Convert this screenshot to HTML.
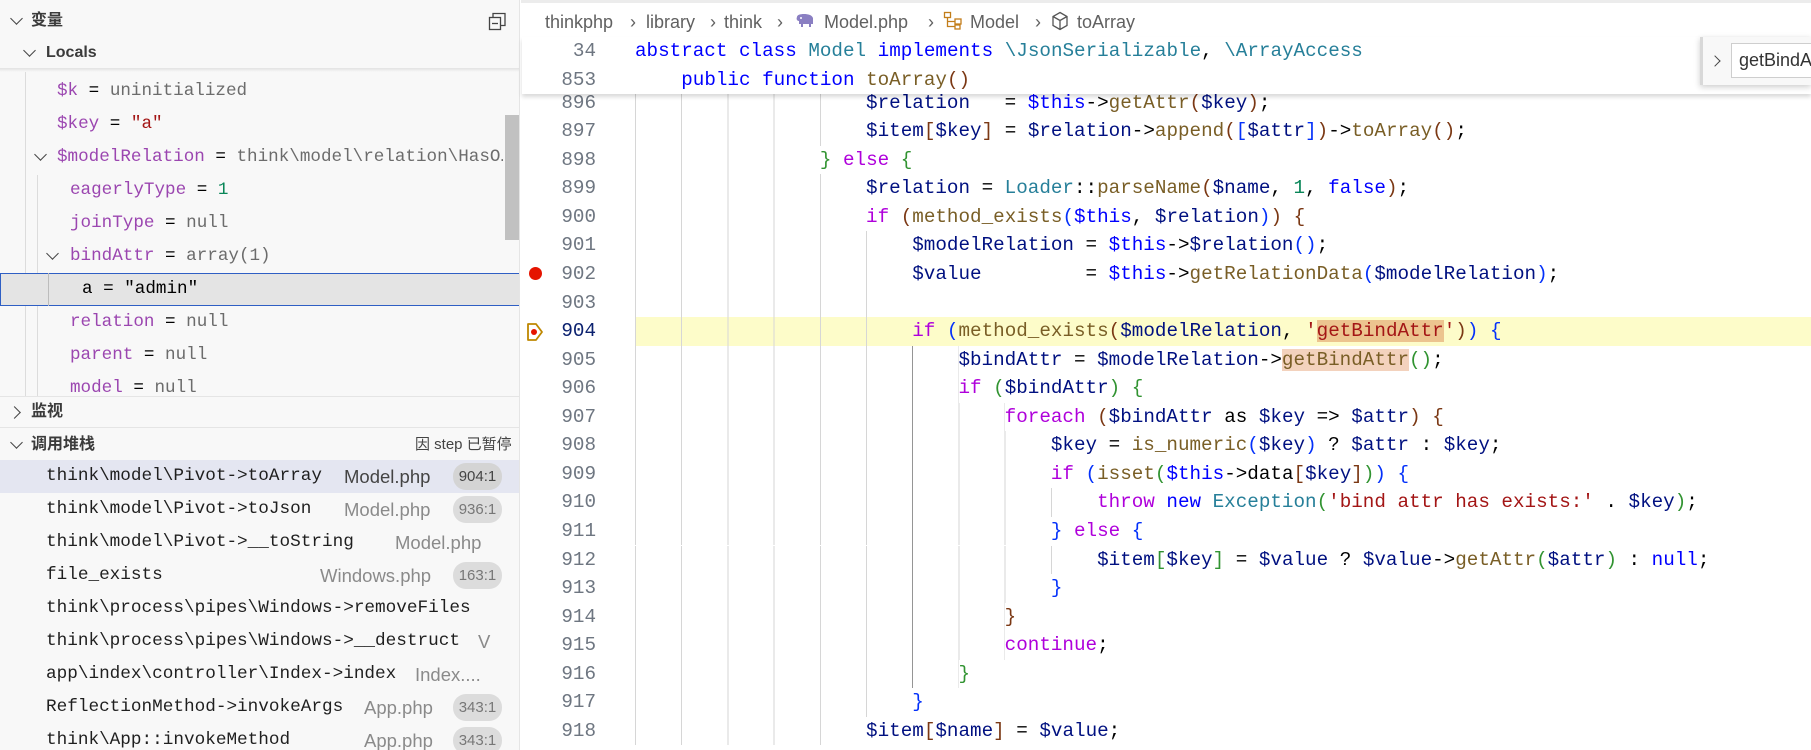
<!DOCTYPE html>
<html><head><meta charset="utf-8"><style>
*{margin:0;padding:0;box-sizing:border-box}
body{width:1811px;height:750px;overflow:hidden;background:#fff;position:relative;font-family:"Liberation Sans","Noto Sans CJK SC",sans-serif}
.abs{position:absolute;white-space:pre}
#side{position:absolute;left:0;top:0;width:520px;height:750px;background:#f8f8f8;border-right:1px solid #e5e5e5;overflow:hidden}
.hdr{position:absolute;font-weight:bold;font-size:16px;color:#3b3b3b;line-height:20px}
.chev{position:absolute;width:9px;height:9px;border-right:1.4px solid #444;border-bottom:1.4px solid #444}
.cd{transform:rotate(45deg)}
.cr{transform:rotate(-45deg)}
.tv{position:absolute;font-family:"Liberation Mono",monospace;font-size:17.6px;line-height:33px;white-space:pre}
.nm{color:#9b46b0}.vl{color:#6c6c6c}.st{color:#a31515}.nu{color:#098658}
.cs{position:absolute;left:0;width:520px;height:33px}
.cs .n{position:absolute;left:46px;top:0;font-family:"Liberation Mono",monospace;font-size:17.7px;line-height:33px;color:#1f1f1f;white-space:pre}
.cs .f{position:absolute;top:0;font-size:18.5px;line-height:33px;color:#8a8a8a;white-space:pre}
.cs .bd{position:absolute;left:453px;top:3px;width:49px;height:27px;border-radius:13px;background:#dcdcdc;color:#777;font-size:15px;line-height:27px;text-align:center}
.ln{position:absolute;left:540px;width:56px;text-align:right;font-family:"Liberation Mono",monospace;font-size:19.25px;line-height:28.55px;color:#6e7681}
.cl{position:absolute;left:635px;font-family:"Liberation Mono",monospace;font-size:19.25px;line-height:28.55px;color:#000;white-space:pre}
.gd{position:absolute;left:635px;height:28.55px;background:repeating-linear-gradient(to right,#d6d6d6 0 1px,transparent 1px 46.2px)}
.k{color:#0000ff}.c{color:#af00db}.v{color:#001080}.f{color:#795e26}.s{color:#a31515}.n{color:#098658}.t{color:#267f99}
.b1{color:#0431fa}.b2{color:#319331}.b3{color:#7b3814}
.hl{background:#ecc48f}.hl2{background:#f3d2bd}
.bc{position:absolute;top:11px;font-size:18px;line-height:22px;color:#616161;white-space:pre}
</style></head><body>

<div id="side">
  <div class="chev cd" style="left:12px;top:14px"></div>
  <div class="hdr" style="left:31px;top:11px">变量</div>
  <svg class="abs" style="left:488px;top:12px" width="19" height="19" viewBox="0 0 19 19"><rect x="1.5" y="5.5" width="11" height="12" fill="none" stroke="#444" stroke-width="1.3"/><path d="M5 5.5V1.5h12v12h-4.5" fill="none" stroke="#444" stroke-width="1.3"/><path d="M4 11.5h6" stroke="#444" stroke-width="1.3"/></svg>
  <div class="chev cd" style="left:25px;top:46px"></div>
  <div class="hdr" style="left:46px;top:43px">Locals</div>
  <div class="abs" style="left:0;top:68px;width:520px;height:4px;background:linear-gradient(#e2e2e2,rgba(248,248,248,0))"></div>

  <div class="abs" style="left:25px;top:72px;width:1px;height:325px;background:#dcdcdc"></div>
  <div class="abs" style="left:37px;top:175px;width:1px;height:222px;background:#dcdcdc"></div>
  <div class="abs" style="left:0;top:273px;width:520px;height:33px;background:#e4e4e4;border:1px solid #2f5fc4"></div>
  <div class="abs" style="left:48px;top:273px;width:1px;height:33px;background:#bcbcbc"></div>

  <div class="tv" style="left:57px;top:75px"><span class="nm">$k</span> = <span class="vl">uninitialized</span></div>
  <div class="tv" style="left:57px;top:108px"><span class="nm">$key</span> = <span class="st">"a"</span></div>
  <div class="chev cd" style="left:36px;top:150px"></div>
  <div class="tv" style="left:57px;top:141px"><span class="nm">$modelRelation</span> = <span class="vl">think\model\relation\HasO…</span></div>
  <div class="tv" style="left:70px;top:174px"><span class="nm">eagerlyType</span> = <span class="nu">1</span></div>
  <div class="tv" style="left:70px;top:207px"><span class="nm">joinType</span> = <span class="vl">null</span></div>
  <div class="chev cd" style="left:48px;top:249px"></div>
  <div class="tv" style="left:70px;top:240px"><span class="nm">bindAttr</span> = <span class="vl">array(1)</span></div>
  <div class="tv" style="left:82px;top:273px;color:#000">a = "admin"</div>
  <div class="tv" style="left:70px;top:306px"><span class="nm">relation</span> = <span class="vl">null</span></div>
  <div class="tv" style="left:70px;top:339px"><span class="nm">parent</span> = <span class="vl">null</span></div>
  <div class="tv" style="left:70px;top:372px"><span class="nm">model</span> = <span class="vl">null</span></div>
  <div class="abs" style="left:505px;top:115px;width:14px;height:125px;background:#c1c1c1"></div>

  <div class="abs" style="left:0;top:396px;width:520px;height:32px;background:#f8f8f8;border-top:1px solid #e5e5e5;border-bottom:1px solid #e5e5e5"></div>
  <div class="chev cr" style="left:10px;top:408px"></div>
  <div class="hdr" style="left:31px;top:402px">监视</div>
  <div class="chev cd" style="left:12px;top:438px"></div>
  <div class="hdr" style="left:31px;top:435px">调用堆栈</div>
  <div class="abs" style="left:415px;top:435px;font-size:15px;line-height:20px;color:#444">因 step 已暂停</div>

  <div class="cs" style="top:460px;background:#e4e6f1"><span class="n">think\model\Pivot-&gt;toArray</span><span class="f" style="left:344px;color:#444">Model.php</span><span class="bd" style="color:#444;background:#d4d4d4">904:1</span></div>
  <div class="cs" style="top:493px"><span class="n">think\model\Pivot-&gt;toJson</span><span class="f" style="left:344px">Model.php</span><span class="bd">936:1</span></div>
  <div class="cs" style="top:526px"><span class="n">think\model\Pivot-&gt;__toString</span><span class="f" style="left:395px">Model.php</span></div>
  <div class="cs" style="top:559px"><span class="n">file_exists</span><span class="f" style="left:320px">Windows.php</span><span class="bd">163:1</span></div>
  <div class="cs" style="top:592px"><span class="n">think\process\pipes\Windows-&gt;removeFiles</span></div>
  <div class="cs" style="top:625px"><span class="n">think\process\pipes\Windows-&gt;__destruct</span><span class="f" style="left:478px">V</span></div>
  <div class="cs" style="top:658px"><span class="n">app\index\controller\Index-&gt;index</span><span class="f" style="left:415px">Index....</span></div>
  <div class="cs" style="top:691px"><span class="n">ReflectionMethod-&gt;invokeArgs</span><span class="f" style="left:364px">App.php</span><span class="bd">343:1</span></div>
  <div class="cs" style="top:724px"><span class="n">think\App::invokeMethod</span><span class="f" style="left:364px">App.php</span><span class="bd">343:1</span></div>
</div>

<div class="abs" style="left:521px;top:0;width:1290px;height:3px;background:#ececec"></div>
<div class="bc" style="left:545px">thinkphp</div>
<div class="bc" style="left:630px">›</div>
<div class="bc" style="left:646px">library</div>
<div class="bc" style="left:710px">›</div>
<div class="bc" style="left:724px">think</div>
<div class="bc" style="left:777px">›</div>
<svg class="abs" style="left:794px;top:13px" width="22" height="16" viewBox="0 0 22 16"><path d="M3 4c0-2 3-3 7-3s8 1 9 4v6h-2v3h-2v-3H9v3H7v-3H5V8C3 8 2 6 3 4z" fill="#8a7fc2"/><circle cx="7" cy="5" r="1" fill="#fff"/></svg>
<div class="bc" style="left:824px">Model.php</div>
<div class="bc" style="left:928px">›</div>
<svg class="abs" style="left:943px;top:11px" width="20" height="20" viewBox="0 0 20 20" fill="none" stroke="#c27d1a" stroke-width="1.3"><rect x="1.5" y="1.5" width="6" height="5"/><rect x="12" y="8" width="6" height="5"/><rect x="12" y="14" width="5" height="4"/><path d="M4.5 6.5v9h7.5M4.5 10.5h7.5"/></svg>
<div class="bc" style="left:970px">Model</div>
<div class="bc" style="left:1035px">›</div>
<svg class="abs" style="left:1051px;top:11px" width="18" height="20" viewBox="0 0 18 20" fill="none" stroke="#555" stroke-width="1.3"><path d="M9 1.5l7 4v9l-7 4-7-4v-9z M2 5.5l7 4 7-4 M9 9.5v9"/></svg>
<div class="bc" style="left:1077px">toArray</div>

<div class="gd" style="top:88.7px;width:231px"></div>
<div class="gd" style="top:117.25px;width:231px"></div>
<div class="gd" style="top:145.8px;width:185px"></div>
<div class="gd" style="top:174.35px;width:231px"></div>
<div class="gd" style="top:202.9px;width:231px"></div>
<div class="gd" style="top:231.45px;width:277px"></div>
<div class="gd" style="top:260px;width:277px"></div>
<div class="gd" style="top:288.55px;width:277px"></div>
<div class="abs" style="left:635px;top:317.1px;width:1176px;height:28.55px;background:#fdfcc9"></div>
<div class="gd" style="top:317.1px;width:277px"></div>
<div class="gd" style="top:345.65px;width:324px"></div>
<div class="gd" style="top:374.2px;width:324px"></div>
<div class="gd" style="top:402.75px;width:370px"></div>
<div class="gd" style="top:431.3px;width:416px"></div>
<div class="gd" style="top:459.85px;width:416px"></div>
<div class="gd" style="top:488.4px;width:462px"></div>
<div class="gd" style="top:516.95px;width:416px"></div>
<div class="gd" style="top:545.5px;width:462px"></div>
<div class="gd" style="top:574.05px;width:416px"></div>
<div class="gd" style="top:602.6px;width:370px"></div>
<div class="gd" style="top:631.15px;width:370px"></div>
<div class="gd" style="top:659.7px;width:324px"></div>
<div class="gd" style="top:688.25px;width:277px"></div>
<div class="gd" style="top:716.8px;width:231px"></div>
<div class="abs" style="left:912px;top:345.65px;width:1px;height:342.6px;background:#959595"></div>

<div class="ln" style="top:88.7px">896</div>
<div class="ln" style="top:117.25px">897</div>
<div class="ln" style="top:145.8px">898</div>
<div class="ln" style="top:174.35px">899</div>
<div class="ln" style="top:202.9px">900</div>
<div class="ln" style="top:231.45px">901</div>
<div class="ln" style="top:260px">902</div>
<div class="ln" style="top:288.55px">903</div>
<div class="ln" style="top:317.1px;color:#0b216f">904</div>
<div class="ln" style="top:345.65px">905</div>
<div class="ln" style="top:374.2px">906</div>
<div class="ln" style="top:402.75px">907</div>
<div class="ln" style="top:431.3px">908</div>
<div class="ln" style="top:459.85px">909</div>
<div class="ln" style="top:488.4px">910</div>
<div class="ln" style="top:516.95px">911</div>
<div class="ln" style="top:545.5px">912</div>
<div class="ln" style="top:574.05px">913</div>
<div class="ln" style="top:602.6px">914</div>
<div class="ln" style="top:631.15px">915</div>
<div class="ln" style="top:659.7px">916</div>
<div class="ln" style="top:688.25px">917</div>
<div class="ln" style="top:716.8px">918</div>

<div class="abs" style="left:529px;top:267px;width:13px;height:13px;border-radius:50%;background:#e51400"></div>
<svg class="abs" style="left:526px;top:322px" width="18" height="20" viewBox="0 0 18 20"><path d="M2 2h8l6 8-6 8H2z" fill="#fff" stroke="#be8700" stroke-width="1.8" stroke-linejoin="round"/><circle cx="8" cy="10" r="3" fill="#e51400"/></svg>

<div class="cl" style="top:88.7px">                    <span class="v">$relation</span>   = <span class="k">$this</span>-&gt;<span class="f">getAttr</span><span class="b3">(</span><span class="v">$key</span><span class="b3">)</span>;</div>
<div class="cl" style="top:117.25px">                    <span class="v">$item</span><span class="b3">[</span><span class="v">$key</span><span class="b3">]</span> = <span class="v">$relation</span>-&gt;<span class="f">append</span><span class="b3">(</span><span class="b1">[</span><span class="v">$attr</span><span class="b1">]</span><span class="b3">)</span>-&gt;<span class="f">toArray</span><span class="b3">()</span>;</div>
<div class="cl" style="top:145.8px">                <span class="b2">}</span> <span class="c">else</span> <span class="b2">{</span></div>
<div class="cl" style="top:174.35px">                    <span class="v">$relation</span> = <span class="t">Loader</span>::<span class="f">parseName</span><span class="b3">(</span><span class="v">$name</span>, <span class="n">1</span>, <span class="k">false</span><span class="b3">)</span>;</div>
<div class="cl" style="top:202.9px">                    <span class="c">if</span> <span class="b3">(</span><span class="f">method_exists</span><span class="b1">(</span><span class="k">$this</span>, <span class="v">$relation</span><span class="b1">)</span><span class="b3">)</span> <span class="b3">{</span></div>
<div class="cl" style="top:231.45px">                        <span class="v">$modelRelation</span> = <span class="k">$this</span>-&gt;<span class="v">$relation</span><span class="b1">()</span>;</div>
<div class="cl" style="top:260px">                        <span class="v">$value</span>         = <span class="k">$this</span>-&gt;<span class="f">getRelationData</span><span class="b1">(</span><span class="v">$modelRelation</span><span class="b1">)</span>;</div>
<div class="cl" style="top:317.1px">                        <span class="c">if</span> <span class="b1">(</span><span class="f">method_exists</span><span class="b3">(</span><span class="v">$modelRelation</span>, <span class="s">'<span class="hl">getBindAttr</span>'</span><span class="b3">)</span><span class="b1">)</span> <span class="b1">{</span></div>
<div class="cl" style="top:345.65px">                            <span class="v">$bindAttr</span> = <span class="v">$modelRelation</span>-&gt;<span class="f hl2">getBindAttr</span><span class="b2">()</span>;</div>
<div class="cl" style="top:374.2px">                            <span class="c">if</span> <span class="b2">(</span><span class="v">$bindAttr</span><span class="b2">)</span> <span class="b2">{</span></div>
<div class="cl" style="top:402.75px">                                <span class="c">foreach</span> <span class="b3">(</span><span class="v">$bindAttr</span> as <span class="v">$key</span> =&gt; <span class="v">$attr</span><span class="b3">)</span> <span class="b3">{</span></div>
<div class="cl" style="top:431.3px">                                    <span class="v">$key</span> = <span class="f">is_numeric</span><span class="b1">(</span><span class="v">$key</span><span class="b1">)</span> ? <span class="v">$attr</span> : <span class="v">$key</span>;</div>
<div class="cl" style="top:459.85px">                                    <span class="c">if</span> <span class="b1">(</span><span class="f">isset</span><span class="b2">(</span><span class="k">$this</span>-&gt;data<span class="b3">[</span><span class="v">$key</span><span class="b3">]</span><span class="b2">)</span><span class="b1">)</span> <span class="b1">{</span></div>
<div class="cl" style="top:488.4px">                                        <span class="c">throw</span> <span class="k">new</span> <span class="t">Exception</span><span class="b2">(</span><span class="s">'bind attr has exists:'</span> . <span class="v">$key</span><span class="b2">)</span>;</div>
<div class="cl" style="top:516.95px">                                    <span class="b1">}</span> <span class="c">else</span> <span class="b1">{</span></div>
<div class="cl" style="top:545.5px">                                        <span class="v">$item</span><span class="b2">[</span><span class="v">$key</span><span class="b2">]</span> = <span class="v">$value</span> ? <span class="v">$value</span>-&gt;<span class="f">getAttr</span><span class="b2">(</span><span class="v">$attr</span><span class="b2">)</span> : <span class="k">null</span>;</div>
<div class="cl" style="top:574.05px">                                    <span class="b1">}</span></div>
<div class="cl" style="top:602.6px">                                <span class="b3">}</span></div>
<div class="cl" style="top:631.15px">                                <span class="c">continue</span>;</div>
<div class="cl" style="top:659.7px">                            <span class="b2">}</span></div>
<div class="cl" style="top:688.25px">                        <span class="b1">}</span></div>
<div class="cl" style="top:716.8px">                    <span class="v">$item</span><span class="b3">[</span><span class="v">$name</span><span class="b3">]</span> = <span class="v">$value</span>;</div>

<div class="abs" style="left:522px;top:37px;width:1289px;height:57px;background:#fff;box-shadow:0 3px 4px rgba(0,0,0,0.15)"></div>
<div class="ln" style="top:37px">34</div>
<div class="ln" style="top:65.5px">853</div>
<div class="cl" style="top:37px"><span class="k">abstract</span> <span class="k">class</span> <span class="t">Model</span> <span class="k">implements</span> <span class="t">\JsonSerializable</span>, <span class="t">\ArrayAccess</span></div>
<div class="cl" style="top:65.5px">    <span class="k">public</span> <span class="k">function</span> <span class="f">toArray</span><span class="b3">()</span></div>

<div class="abs" style="left:1700px;top:37px;width:111px;height:48px;background:#f8f8f8;border-left:3px solid #d8d8d8;box-shadow:0 2px 6px rgba(0,0,0,0.2)"></div>
<div class="chev cr" style="left:1711px;top:57px;width:8px;height:8px"></div>
<div class="abs" style="left:1731px;top:43px;width:80px;height:35px;background:#fff;border:1px solid #cecece;border-right:none"></div>
<div class="abs" style="left:1739px;top:49px;font-size:18px;line-height:22px;color:#333">getBindA</div>
</body></html>
